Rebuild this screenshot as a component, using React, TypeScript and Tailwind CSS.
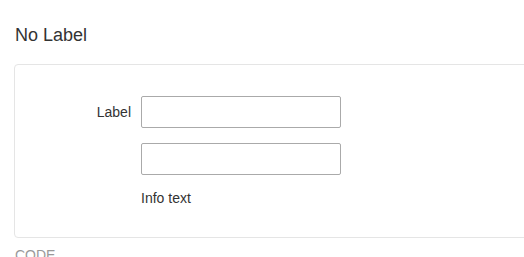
export default function App() {
  return (
    <div className="h-[257px] w-[524px] overflow-hidden bg-white font-['Liberation_Sans',Arial,sans-serif] text-[#333]">
      <div className="pl-[14px] pt-[25px]">
        <h2 className="pl-px text-[18px] leading-[20px]">No Label</h2>

        {/* demo card, runs past the right edge */}
        <div className="mt-[19px] w-[560px] rounded-tl-[4px] rounded-bl-[4px] border border-[#e5e5e5] pb-[29px] pt-[31px]">
          <div className="flex items-center">
            <label className="w-[126px] pr-[10px] text-right text-[14px] leading-[20px]">Label</label>
            <input
              type="text"
              className="h-[32px] w-[200px] rounded-[2px] border border-[#aaa] px-2 text-[14px] outline-none"
            />
          </div>
          <div className="mt-[15px] flex">
            <div className="w-[126px]" />
            <div>
              <input
                type="text"
                className="h-[32px] w-[200px] rounded-[2px] border border-[#aaa] px-2 text-[14px] outline-none"
              />
              <p className="mt-[13px] text-[14px] leading-[20px]">Info text</p>
            </div>
          </div>
        </div>

        <div className="mt-[7px] pl-px text-[14px] leading-[20px] uppercase text-[#999]">Code</div>
      </div>
    </div>
  );
}
